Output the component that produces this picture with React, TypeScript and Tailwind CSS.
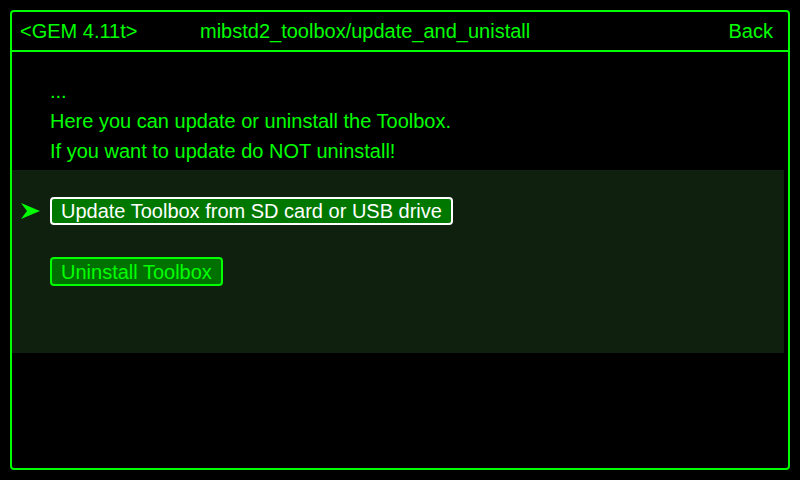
import React from "react";

export default function App() {
  const font = { fontFamily: '"Liberation Sans", Arial, sans-serif' };
  return (
    <div className="w-[800px] h-[480px] bg-black p-[10px]" style={font}>
      <div className="w-full h-full border-2 border-[#00ff00] rounded-[4px] flex flex-col">
        <div className="h-[40px] shrink-0 border-b-2 border-[#00ff00] flex items-center text-[20px] text-[#00ff00] leading-none pl-[8px] pr-[15px]">
          <div className="w-[180px]">&lt;GEM 4.11t&gt;</div>
          <div className="flex-1">mibstd2_toolbox/update_and_unistall</div>
          <div>Back</div>
        </div>
        <div className="pt-[24px] pl-[38px] text-[20px] leading-[30px] text-[#00ff00]">
          <div>...</div>
          <div>Here you can update or uninstall the Toolbox.</div>
          <div>If you want to update do NOT uninstall!</div>
        </div>
        <div className="mt-[4px] mr-[4px] h-[183px] bg-[#0f200f] flex flex-col pt-[27px] gap-[32px]">
          <div className="flex items-center">
            <div className="w-[38px] flex pl-[9px]">
              <svg width="19" height="16" viewBox="0 0 19 16">
                <path d="M0 0 L19 8 L0 16 L6 8 Z" fill="#00ff00" />
              </svg>
            </div>
            <div className="h-[28px] border-2 border-white rounded-[4px] bg-[#007800] text-white text-[20px] leading-none flex items-center px-[9px]">
              Update Toolbox from SD card or USB drive
            </div>
          </div>
          <div className="flex items-center pl-[38px]">
            <div className="h-[29px] border-2 border-[#00ff00] rounded-[4px] bg-[#007000] text-[#00ff00] text-[20px] leading-none flex items-center px-[9px]">
              Uninstall Toolbox
            </div>
          </div>
        </div>
      </div>
    </div>
  );
}
